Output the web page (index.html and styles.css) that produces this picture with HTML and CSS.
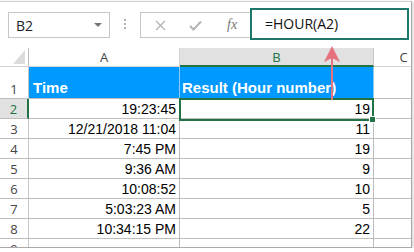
FILE: index.html
```html
<!DOCTYPE html>
<html lang="en">

<head>
    <meta charset="UTF-8">
    <title>HOUR function</title>
    <link rel="stylesheet" href="styles.css">
</head>

<body>
    <div class="frame">
        <div class="toolbar">
            <div class="namebox">
                <span>B2</span>
                <span class="caret"></span>
            </div>
            <div class="dots"><i></i><i></i><i></i></div>
            <div class="btnbox">
                <svg class="icon-x" width="11" height="11" viewBox="0 0 11 11">
                    <path d="M1 1 L10 10 M10 1 L1 10" stroke="#b4b4b4" stroke-width="1.4" fill="none" />
                </svg>
                <svg class="icon-ok" width="13" height="11" viewBox="0 0 13 11">
                    <path d="M1 6 L4.5 9.5 L12 1.5" stroke="#b4b4b4" stroke-width="2" fill="none" />
                </svg>
                <span class="fx">fx</span>
            </div>
            <div class="formula">=HOUR(A2)</div>
        </div>

        <div class="sheet">
            <div class="cell corner"><span class="tri"></span></div>
            <div class="cell colhead">A</div>
            <div class="cell colhead active">B</div>
            <div class="cell colhead">C</div>

            <div class="cell rowhead">1</div>
            <div class="cell title">Time</div>
            <div class="cell title">Result (Hour number)</div>
            <div class="cell"></div>

            <div class="cell rowhead active">2</div>
            <div class="cell">19:23:45</div>
            <div class="cell">19</div>
            <div class="cell"></div>

            <div class="cell rowhead">3</div>
            <div class="cell">12/21/2018 11:04</div>
            <div class="cell">11</div>
            <div class="cell"></div>

            <div class="cell rowhead">4</div>
            <div class="cell">7:45 PM</div>
            <div class="cell">19</div>
            <div class="cell"></div>

            <div class="cell rowhead">5</div>
            <div class="cell">9:36 AM</div>
            <div class="cell">9</div>
            <div class="cell"></div>

            <div class="cell rowhead">6</div>
            <div class="cell">10:08:52</div>
            <div class="cell">10</div>
            <div class="cell"></div>

            <div class="cell rowhead">7</div>
            <div class="cell">5:03:23 AM</div>
            <div class="cell">5</div>
            <div class="cell"></div>

            <div class="cell rowhead">8</div>
            <div class="cell">10:34:15 PM</div>
            <div class="cell">22</div>
            <div class="cell"></div>

            <div class="cell rowhead">9</div>
            <div class="cell blank"></div>
            <div class="cell blank"></div>
            <div class="cell blank"></div>

            <div class="selection"><span class="handle"></span></div>
        </div>

        <svg class="arrow" width="24" height="60" viewBox="0 0 24 60">
            <rect x="11" y="12" width="2" height="44" fill="#e8717f" />
            <path d="M12 2 L20 18 L12 14 L4 18 Z" fill="#e8717f" />
        </svg>
    </div>
</body>

</html>
```

FILE: styles.css
```css
body {
    margin: 0;
    padding: 0;
    background: #ffffff;
    font-family: 'Liberation Sans', Arial, sans-serif;
    overflow: hidden;
}

.frame {
    position: relative;
    margin-top: 1px;
    width: 411px;
    height: 245px;
    border-top: 1px solid #d4d4d4;
    border-right: 1px solid #a9a9a9;
    border-bottom: 1px solid #a9a9a9;
    box-shadow: 1px 1px 3px rgba(0, 0, 0, 0.2);
    overflow: hidden;
}

/* formula bar */

.toolbar {
    display: flex;
    align-items: flex-start;
    height: 46px;
}

.namebox {
    box-sizing: border-box;
    margin: 10px 0 0 8px;
    width: 102px;
    height: 26px;
    border: 1px solid #c6c6c6;
    display: flex;
    align-items: center;
    justify-content: space-between;
    padding: 0 7px 0 7px;
    font-family: 'Open Sans', sans-serif;
    font-size: 14px;
    color: #222;
}

.caret {
    width: 0;
    height: 0;
    border-left: 4px solid transparent;
    border-right: 4px solid transparent;
    border-top: 4px solid #777;
}

.dots {
    width: 30px;
    margin-top: 17px;
    display: flex;
    flex-direction: column;
    align-items: center;
    gap: 2px;
}

.dots i {
    display: block;
    width: 2px;
    height: 2px;
    background: #b0b0b0;
}

.btnbox {
    box-sizing: border-box;
    margin-top: 10px;
    width: 110px;
    height: 26px;
    border: 1px solid #c6c6c6;
    border-right: none;
    display: flex;
    align-items: center;
}

.icon-x {
    margin-left: 14px;
}

.icon-ok {
    margin-left: 23px;
}

.fx {
    margin-left: 25px;
    font-family: 'Liberation Serif', serif;
    font-style: italic;
    font-size: 14px;
    color: #777;
}

.formula {
    box-sizing: border-box;
    margin-top: 6px;
    width: 159px;
    height: 32px;
    border: 2px solid #1f766b;
    padding-left: 13px;
    line-height: 28px;
    font-family: 'Open Sans', sans-serif;
    font-size: 14px;
    color: #111;
}

/* grid */

.sheet {
    position: relative;
    display: grid;
    grid-template-columns: 29px 151px 194px 60px;
    grid-template-rows: 19px 32px repeat(8, 20px);
}

.cell {
    box-sizing: border-box;
    border-right: 1px solid #bdbdbd;
    border-bottom: 1px solid #bdbdbd;
    display: flex;
    align-items: flex-end;
    justify-content: flex-end;
    padding: 0 3px 1px 0;
    font-size: 14px;
    line-height: 16px;
    color: #000;
}

.corner {
    position: relative;
    border-bottom-color: #d4d4d4;
}

.tri {
    position: absolute;
    right: 3px;
    bottom: 2px;
    width: 0;
    height: 0;
    border-left: 12px solid transparent;
    border-bottom: 14px solid #dcdcdc;
}

.colhead {
    justify-content: center;
    align-items: center;
    padding: 0;
    font-family: 'Open Sans', sans-serif;
    font-size: 13px;
    color: #444;
    border-bottom-color: #d4d4d4;
    border-right-color: #d4d4d4;
}

.colhead.active {
    background: #e1e1e1;
    color: #217346;
    border-bottom: 2px solid #217346;
    border-right-color: #c6c6c6;
}

.rowhead {
    justify-content: center;
    padding: 0 0 1px 0;
    font-family: 'Open Sans', sans-serif;
    font-size: 13px;
    color: #444;
    border-right-color: #c6c6c6;
}

.rowhead.active {
    background: #e1e1e1;
    color: #217346;
    border-right: 2px solid #217346;
}

.title {
    justify-content: flex-start;
    padding: 0 0 2px 4px;
    background: #0099ff;
    border-right-color: #8fcaf3;
    color: #ffffff;
    font-weight: bold;
    font-size: 15px;
    line-height: 17px;
}

.title + .title {
    padding-left: 2px;
}

.blank {
    border-bottom: none;
}

.selection {
    position: absolute;
    left: 179px;
    top: 50px;
    width: 195px;
    height: 23px;
    box-sizing: border-box;
    border: 2px solid #217346;
}

.handle {
    position: absolute;
    right: -4px;
    bottom: -4px;
    width: 5px;
    height: 5px;
    background: #217346;
    border: 1px solid #ffffff;
}

.arrow {
    position: absolute;
    left: 320px;
    top: 42px;
}
```
